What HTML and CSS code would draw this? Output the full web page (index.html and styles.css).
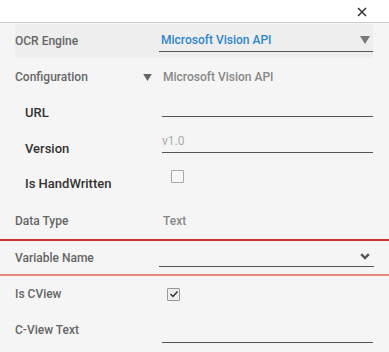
FILE: index.html
```html
<!DOCTYPE html>
<html>
<head>
<meta charset="utf-8">
<link rel="stylesheet" href="styles.css">
</head>
<body>
<div class="panel">
  <div class="header">
    <svg class="close" width="10" height="10" viewBox="0 0 10 10"><path d="M1 1L9 9M9 1L1 9" stroke="#333" stroke-width="1.5" fill="none"/></svg>
  </div>
  <div class="row row-ocr">
    <div class="label">OCR Engine</div>
    <div class="select sel-ocr">
      <span class="sel-text">Microsoft Vision API</span>
      <svg class="tri" width="10" height="8" viewBox="0 0 10 8"><path d="M0 0H10L5 8Z" fill="#777"/></svg>
    </div>
  </div>
  <div class="row row-config">
    <div class="label label-config">Configuration
      <svg class="tri-config" width="9" height="7" viewBox="0 0 10 8"><path d="M0 0H10L5 8Z" fill="#666"/></svg>
    </div>
    <div class="value-gray">Microsoft Vision API</div>
  </div>
  <div class="row row-url">
    <div class="label sub">URL</div>
    <div class="input inp-url"></div>
  </div>
  <div class="row row-version">
    <div class="label sub">Version</div>
    <div class="input inp-version"><span class="placeholder">v1.0</span></div>
  </div>
  <div class="row row-hw">
    <div class="label sub">Is HandWritten</div>
    <div class="checkbox cb-hw"></div>
  </div>
  <div class="row row-dtype">
    <div class="label">Data Type</div>
    <div class="value-gray val-text">Text</div>
  </div>
  <div class="divider-dark"></div>
  <div class="row row-var">
    <div class="label">Variable Name</div>
    <div class="select sel-var">
      <span class="sel-text"></span>
      <svg class="chev" width="10" height="7" viewBox="0 0 10 7"><path d="M1.2 1.2L5 5L8.8 1.2" stroke="#555" stroke-width="2.4" fill="none"/></svg>
    </div>
  </div>
  <div class="divider-light"></div>
  <div class="row row-cview">
    <div class="label">Is CView</div>
    <div class="checkbox cb-cview">
      <svg width="10" height="8" viewBox="0 0 10 8"><path d="M1.5 4L4 6.5L8.5 1.5" stroke="#333" stroke-width="1.5" fill="none"/></svg>
    </div>
  </div>
  <div class="row row-ctext">
    <div class="label">C-View Text</div>
    <div class="input inp-ctext"></div>
  </div>
</div>
</body>
</html>
```
FILE: styles.css
```css
html, body {
  margin: 0;
  padding: 0;
  background: #f5f5f5;
}
body {
  font-family: Roboto, "Liberation Sans", sans-serif;
  width: 389px;
  height: 352px;
  overflow: hidden;
}
.panel {
  display: flex;
  flex-direction: column;
}
.header {
  height: 22px;
  background: #ffffff;
  border-bottom: 1px solid #cfcfcf;
  display: flex;
  justify-content: flex-end;
  align-items: center;
  padding-right: 22px;
}
.close {
  margin-top: 2px;
}
.row {
  display: flex;
  align-items: center;
  padding-left: 15px;
  width: 358px;
}
.label {
  width: 144px;
  flex: none;
  font-size: 12px;
  font-weight: 500;
  color: #666;
}
.label.sub {
  padding-left: 10px;
  width: 134px;
  font-size: 13px;
  color: #333;
}
.row-ocr {
  margin-top: 1px;
  height: 34px;
  background: #eeeeee;
  margin-left: 15px;
  padding-left: 0;
}
.select {
  flex: 1;
  display: flex;
  align-items: center;
  justify-content: space-between;
  border-bottom: 1px solid #555;
  box-sizing: border-box;
}
.sel-ocr {
  height: 24px;
  margin-top: 4px;
  align-self: flex-start;
  padding: 0 3px 0 2px;
}
.sel-text {
  font-size: 12px;
  font-weight: 500;
  color: #2e86cf;
}
.tri {
  margin-top: 1px;
}
.row-config {
  height: 34px;
  padding-top: 2px;
}
.label-config {
  display: flex;
  align-items: center;
  justify-content: space-between;
  padding-right: 7px;
  width: 137px;
}
.tri-config {
  margin-top: 1px;
}
.value-gray {
  font-size: 12px;
  font-weight: 500;
  color: #888;
  padding-left: 4px;
}
.input {
  flex: 1;
  margin-left: 3px;
  align-self: flex-start;
  height: 20px;
  border-bottom: 1px solid #555;
  box-sizing: border-box;
}
.row-url {
  height: 36px;
}
.inp-url {
  margin-top: 3px;
}
.row-version {
  height: 36px;
}
.inp-version {
  margin-top: 3px;
  font-size: 12px;
  display: flex;
  align-items: center;
  padding-bottom: 3px;
}
.placeholder {
  color: #aaa;
}
.row-hw {
  height: 35px;
}
.checkbox {
  width: 11px;
  height: 11px;
  border: 1px solid #a8a8a8;
  border-radius: 1px;
  background: #f7f7f7;
  display: flex;
  align-items: center;
  justify-content: center;
}
.cb-hw {
  margin-left: 12px;
  align-self: flex-start;
  margin-top: 4px;
}
.row-dtype {
  height: 37px;
  padding-top: 1px;
}
.divider-dark {
  height: 2px;
  background: #c8352c;
}
.val-text {
  padding-left: 4px;
}
.row-var {
  height: 32px;
  padding-top: 1px;
}
.divider-light {
  height: 2px;
  background: #e8877c;
}
.sel-var {
  flex: none;
  width: 215px;
  height: 25px;
  align-self: flex-start;
  margin-top: 0px;
  padding: 0 4px 0 2px;
  align-items: flex-start;
}
.chev {
  margin-top: 11px;
}
.row-cview {
  height: 36px;
}
.cb-cview {
  margin-left: 8px;
  background: #eeeeee;
  border-color: #999;
}
.row-ctext {
  height: 36px;
}
.inp-ctext {
  margin-top: 11px;
  height: 20px;
}
```
